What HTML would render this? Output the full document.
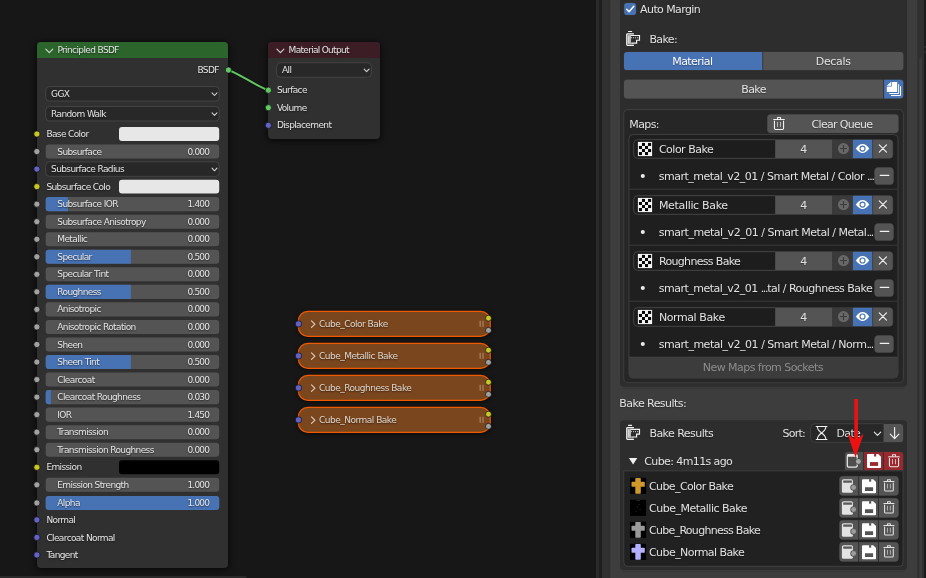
<!DOCTYPE html>
<html lang="en"><head><meta charset="utf-8"><title>Blender bake panel</title>
<style>
html,body{margin:0;padding:0;background:#171717;}
body{width:926px;height:578px;overflow:hidden;position:relative;font-family:"DejaVu Sans","Liberation Sans",sans-serif;}
#root{position:absolute;left:0;top:0;width:926px;height:578px;overflow:hidden;will-change:transform;}
#root div,#root svg{position:absolute;box-sizing:border-box;}
#lay{left:0;top:0;}
.t{line-height:20px;height:20px;white-space:pre;}
.n{text-shadow:0 1px 1.5px rgba(0,0,0,.55);}
.p{text-shadow:0 1px 1px rgba(0,0,0,.35);}
.node{background:#303030;border-radius:4px;box-shadow:0 1px 6px 1px rgba(0,0,0,.65);overflow:hidden;}
.nh{left:0;top:0;width:100%;}
.e{letter-spacing:-1.3px;}
.cns{border-radius:9.6px;box-shadow:0 1px 4px rgba(0,0,0,.6);}
</style></head>
<body><div id="root">
<div class="node" style="left:37.0px;top:42.3px;width:191.3px;height:526.2px"><div class="nh" style="background:#2b652b;height:15.8px"></div></div>
<div class="node" style="left:268.4px;top:42.3px;width:111.4px;height:96.3px"><div class="nh" style="background:#3c1d26;height:15.9px"></div></div>
<div class="cns" style="left:298px;top:310.9px;width:192.6px;height:26px"></div>
<div class="cns" style="left:298px;top:342.9px;width:192.6px;height:26px"></div>
<div class="cns" style="left:298px;top:374.9px;width:192.6px;height:26px"></div>
<div class="cns" style="left:298px;top:406.9px;width:192.6px;height:26px"></div>
<svg id="lay" width="926" height="578" viewBox="0 0 926 578">
<polyline points="45.8,49.1 49.3,52.7 52.8,49.1" fill="none" stroke="#d6dcd6" stroke-width="1.05" stroke-linecap="round" stroke-linejoin="round"/>
<path d="M49.25 86.55H215.65A3.5 3.5 0 0 1 219.15 90.05V97.55A3.5 3.5 0 0 1 215.65 101.05H49.25A3.5 3.5 0 0 1 45.75 97.55V90.05A3.5 3.5 0 0 1 49.25 86.55Z" fill="#282828" stroke="#464646" stroke-width="0.9"/>
<polyline points="212.05,92.9 214.5,95.5 216.95,92.9" fill="none" stroke="#d4d4d4" stroke-width="1.05" stroke-linecap="round" stroke-linejoin="round"/>
<path d="M49.25 106.45H215.65A3.5 3.5 0 0 1 219.15 109.95V117.45A3.5 3.5 0 0 1 215.65 120.95H49.25A3.5 3.5 0 0 1 45.75 117.45V109.95A3.5 3.5 0 0 1 49.25 106.45Z" fill="#282828" stroke="#464646" stroke-width="0.9"/>
<polyline points="212.05,112.8 214.5,115.4 216.95,112.8" fill="none" stroke="#d4d4d4" stroke-width="1.05" stroke-linecap="round" stroke-linejoin="round"/>
<path d="M122 127.05H216.2A3 3 0 0 1 219.2 130.05V137.95A3 3 0 0 1 216.2 140.95H122A3 3 0 0 1 119 137.95V130.05A3 3 0 0 1 122 127.05Z" fill="#e7e7e7"/>
<path d="M48.7 144.49H216.2A3 3 0 0 1 219.2 147.49V155.59A3 3 0 0 1 216.2 158.59H48.7A3 3 0 0 1 45.7 155.59V147.49A3 3 0 0 1 48.7 144.49Z" fill="#545454"/>
<path d="M49.25 161.83H215.65A3.5 3.5 0 0 1 219.15 165.33V172.83A3.5 3.5 0 0 1 215.65 176.33H49.25A3.5 3.5 0 0 1 45.75 172.83V165.33A3.5 3.5 0 0 1 49.25 161.83Z" fill="#282828" stroke="#464646" stroke-width="0.9"/>
<polyline points="212.05,168.18 214.5,170.78 216.95,168.18" fill="none" stroke="#d4d4d4" stroke-width="1.05" stroke-linecap="round" stroke-linejoin="round"/>
<path d="M122 179.67H216.2A3 3 0 0 1 219.2 182.67V190.57A3 3 0 0 1 216.2 193.57H122A3 3 0 0 1 119 190.57V182.67A3 3 0 0 1 122 179.67Z" fill="#e7e7e7"/>
<path d="M48.7 197.11H216.2A3 3 0 0 1 219.2 200.11V208.21A3 3 0 0 1 216.2 211.21H48.7A3 3 0 0 1 45.7 208.21V200.11A3 3 0 0 1 48.7 197.11Z" fill="#545454"/>
<path d="M48.7 197.11H67.91V211.21H48.7A3 3 0 0 1 45.7 208.21V200.11A3 3 0 0 1 48.7 197.11Z" fill="#4772b3"/>
<path d="M48.7 214.65H216.2A3 3 0 0 1 219.2 217.65V225.75A3 3 0 0 1 216.2 228.75H48.7A3 3 0 0 1 45.7 225.75V217.65A3 3 0 0 1 48.7 214.65Z" fill="#545454"/>
<path d="M48.7 232.19H216.2A3 3 0 0 1 219.2 235.19V243.29A3 3 0 0 1 216.2 246.29H48.7A3 3 0 0 1 45.7 243.29V235.19A3 3 0 0 1 48.7 232.19Z" fill="#545454"/>
<path d="M48.7 249.73H216.2A3 3 0 0 1 219.2 252.73V260.83A3 3 0 0 1 216.2 263.83H48.7A3 3 0 0 1 45.7 260.83V252.73A3 3 0 0 1 48.7 249.73Z" fill="#545454"/>
<path d="M48.7 249.73H130.89V263.83H48.7A3 3 0 0 1 45.7 260.83V252.73A3 3 0 0 1 48.7 249.73Z" fill="#4772b3"/>
<path d="M48.7 267.27H216.2A3 3 0 0 1 219.2 270.27V278.37A3 3 0 0 1 216.2 281.37H48.7A3 3 0 0 1 45.7 278.37V270.27A3 3 0 0 1 48.7 267.27Z" fill="#545454"/>
<path d="M48.7 284.81H216.2A3 3 0 0 1 219.2 287.81V295.91A3 3 0 0 1 216.2 298.91H48.7A3 3 0 0 1 45.7 295.91V287.81A3 3 0 0 1 48.7 284.81Z" fill="#545454"/>
<path d="M48.7 284.81H130.89V298.91H48.7A3 3 0 0 1 45.7 295.91V287.81A3 3 0 0 1 48.7 284.81Z" fill="#4772b3"/>
<path d="M48.7 302.35H216.2A3 3 0 0 1 219.2 305.35V313.45A3 3 0 0 1 216.2 316.45H48.7A3 3 0 0 1 45.7 313.45V305.35A3 3 0 0 1 48.7 302.35Z" fill="#545454"/>
<path d="M48.7 319.89H216.2A3 3 0 0 1 219.2 322.89V330.99A3 3 0 0 1 216.2 333.99H48.7A3 3 0 0 1 45.7 330.99V322.89A3 3 0 0 1 48.7 319.89Z" fill="#545454"/>
<path d="M48.7 337.43H216.2A3 3 0 0 1 219.2 340.43V348.53A3 3 0 0 1 216.2 351.53H48.7A3 3 0 0 1 45.7 348.53V340.43A3 3 0 0 1 48.7 337.43Z" fill="#545454"/>
<path d="M48.7 354.97H216.2A3 3 0 0 1 219.2 357.97V366.07A3 3 0 0 1 216.2 369.07H48.7A3 3 0 0 1 45.7 366.07V357.97A3 3 0 0 1 48.7 354.97Z" fill="#545454"/>
<path d="M48.7 354.97H130.89V369.07H48.7A3 3 0 0 1 45.7 366.07V357.97A3 3 0 0 1 48.7 354.97Z" fill="#4772b3"/>
<path d="M48.7 372.51H216.2A3 3 0 0 1 219.2 375.51V383.61A3 3 0 0 1 216.2 386.61H48.7A3 3 0 0 1 45.7 383.61V375.51A3 3 0 0 1 48.7 372.51Z" fill="#545454"/>
<path d="M48.7 390.05H216.2A3 3 0 0 1 219.2 393.05V401.15A3 3 0 0 1 216.2 404.15H48.7A3 3 0 0 1 45.7 401.15V393.05A3 3 0 0 1 48.7 390.05Z" fill="#545454"/>
<path d="M48.7 390.05H50.91V404.15H48.7A3 3 0 0 1 45.7 401.15V393.05A3 3 0 0 1 48.7 390.05Z" fill="#4772b3"/>
<path d="M48.7 407.59H216.2A3 3 0 0 1 219.2 410.59V418.69A3 3 0 0 1 216.2 421.69H48.7A3 3 0 0 1 45.7 418.69V410.59A3 3 0 0 1 48.7 407.59Z" fill="#545454"/>
<path d="M48.7 425.13H216.2A3 3 0 0 1 219.2 428.13V436.23A3 3 0 0 1 216.2 439.23H48.7A3 3 0 0 1 45.7 436.23V428.13A3 3 0 0 1 48.7 425.13Z" fill="#545454"/>
<path d="M48.7 442.67H216.2A3 3 0 0 1 219.2 445.67V453.77A3 3 0 0 1 216.2 456.77H48.7A3 3 0 0 1 45.7 453.77V445.67A3 3 0 0 1 48.7 442.67Z" fill="#545454"/>
<path d="M122 460.31H216.2A3 3 0 0 1 219.2 463.31V471.21A3 3 0 0 1 216.2 474.21H122A3 3 0 0 1 119 471.21V463.31A3 3 0 0 1 122 460.31Z" fill="#000000"/>
<path d="M48.7 477.75H216.2A3 3 0 0 1 219.2 480.75V488.85A3 3 0 0 1 216.2 491.85H48.7A3 3 0 0 1 45.7 488.85V480.75A3 3 0 0 1 48.7 477.75Z" fill="#545454"/>
<path d="M48.7 495.89H216.2A3 3 0 0 1 219.2 498.89V506.99A3 3 0 0 1 216.2 509.99H48.7A3 3 0 0 1 45.7 506.99V498.89A3 3 0 0 1 48.7 495.89Z" fill="#545454"/>
<path d="M48.7 495.89H216.2A3 3 0 0 1 219.2 498.89V506.99A3 3 0 0 1 216.2 509.99H48.7A3 3 0 0 1 45.7 506.99V498.89A3 3 0 0 1 48.7 495.89Z" fill="#4772b3"/>
<polyline points="276.9,49.1 280.4,52.7 283.9,49.1" fill="none" stroke="#dcd6d8" stroke-width="1.05" stroke-linecap="round" stroke-linejoin="round"/>
<path d="M280.15 62.75H367.75A3.5 3.5 0 0 1 371.25 66.25V73.75A3.5 3.5 0 0 1 367.75 77.25H280.15A3.5 3.5 0 0 1 276.65 73.75V66.25A3.5 3.5 0 0 1 280.15 62.75Z" fill="#282828" stroke="#464646" stroke-width="0.9"/>
<polyline points="364.15,69.1 366.6,71.7 369.05,69.1" fill="none" stroke="#d4d4d4" stroke-width="1.05" stroke-linecap="round" stroke-linejoin="round"/>
<path d="M228.4 70 C 236 72, 260 88.2, 268.4 90.2" fill="none" stroke="#0c0c0c" stroke-width="3.6" stroke-opacity=".5"/>
<path d="M228.4 70 C 236 72, 260 88.2, 268.4 90.2" fill="none" stroke="#63c763" stroke-width="2"/>
<path d="M307.88 311.42H480.62A9.6 9.6 0 0 1 490.23 321.02V326.72A9.6 9.6 0 0 1 480.62 336.32H307.88A9.6 9.6 0 0 1 298.27 326.72V321.02A9.6 9.6 0 0 1 307.88 311.42Z" fill="#79461d" stroke="#ee5a00" stroke-width="1.15"/>
<polyline points="311.5,320.9 314.9,324.1 311.5,327.3" fill="none" stroke="#dfd2c6" stroke-width="1.1" stroke-linecap="round" stroke-linejoin="round"/>
<path d="M480.2 320.8V326.8M483.0 320.8V326.8" stroke="#ab7f5b" stroke-width="1.3"/>
<path d="M307.88 343.42H480.62A9.6 9.6 0 0 1 490.23 353.02V358.72A9.6 9.6 0 0 1 480.62 368.32H307.88A9.6 9.6 0 0 1 298.27 358.72V353.02A9.6 9.6 0 0 1 307.88 343.42Z" fill="#79461d" stroke="#ee5a00" stroke-width="1.15"/>
<polyline points="311.5,352.9 314.9,356.1 311.5,359.3" fill="none" stroke="#dfd2c6" stroke-width="1.1" stroke-linecap="round" stroke-linejoin="round"/>
<path d="M480.2 352.8V358.8M483.0 352.8V358.8" stroke="#ab7f5b" stroke-width="1.3"/>
<path d="M307.88 375.42H480.62A9.6 9.6 0 0 1 490.23 385.02V390.72A9.6 9.6 0 0 1 480.62 400.32H307.88A9.6 9.6 0 0 1 298.27 390.72V385.02A9.6 9.6 0 0 1 307.88 375.42Z" fill="#79461d" stroke="#ee5a00" stroke-width="1.15"/>
<polyline points="311.5,384.9 314.9,388.1 311.5,391.3" fill="none" stroke="#dfd2c6" stroke-width="1.1" stroke-linecap="round" stroke-linejoin="round"/>
<path d="M480.2 384.8V390.8M483.0 384.8V390.8" stroke="#ab7f5b" stroke-width="1.3"/>
<path d="M307.88 407.42H480.62A9.6 9.6 0 0 1 490.23 417.02V422.72A9.6 9.6 0 0 1 480.62 432.32H307.88A9.6 9.6 0 0 1 298.27 422.72V417.02A9.6 9.6 0 0 1 307.88 407.42Z" fill="#79461d" stroke="#ee5a00" stroke-width="1.15"/>
<polyline points="311.5,416.9 314.9,420.1 311.5,423.3" fill="none" stroke="#dfd2c6" stroke-width="1.1" stroke-linecap="round" stroke-linejoin="round"/>
<path d="M480.2 416.8V422.8M483.0 416.8V422.8" stroke="#ab7f5b" stroke-width="1.3"/>
<circle cx="36.9" cy="134" r="3.1" fill="#c7c729" stroke="#0e0e0e" stroke-width=".7"/>
<circle cx="36.9" cy="151.54" r="3.1" fill="#a1a1a1" stroke="#0e0e0e" stroke-width=".7"/>
<circle cx="36.9" cy="169.08" r="3.1" fill="#6363c7" stroke="#0e0e0e" stroke-width=".7"/>
<circle cx="36.9" cy="186.62" r="3.1" fill="#c7c729" stroke="#0e0e0e" stroke-width=".7"/>
<circle cx="36.9" cy="204.16" r="3.1" fill="#a1a1a1" stroke="#0e0e0e" stroke-width=".7"/>
<circle cx="36.9" cy="221.7" r="3.1" fill="#a1a1a1" stroke="#0e0e0e" stroke-width=".7"/>
<circle cx="36.9" cy="239.24" r="3.1" fill="#a1a1a1" stroke="#0e0e0e" stroke-width=".7"/>
<circle cx="36.9" cy="256.78" r="3.1" fill="#a1a1a1" stroke="#0e0e0e" stroke-width=".7"/>
<circle cx="36.9" cy="274.32" r="3.1" fill="#a1a1a1" stroke="#0e0e0e" stroke-width=".7"/>
<circle cx="36.9" cy="291.86" r="3.1" fill="#a1a1a1" stroke="#0e0e0e" stroke-width=".7"/>
<circle cx="36.9" cy="309.4" r="3.1" fill="#a1a1a1" stroke="#0e0e0e" stroke-width=".7"/>
<circle cx="36.9" cy="326.94" r="3.1" fill="#a1a1a1" stroke="#0e0e0e" stroke-width=".7"/>
<circle cx="36.9" cy="344.48" r="3.1" fill="#a1a1a1" stroke="#0e0e0e" stroke-width=".7"/>
<circle cx="36.9" cy="362.02" r="3.1" fill="#a1a1a1" stroke="#0e0e0e" stroke-width=".7"/>
<circle cx="36.9" cy="379.56" r="3.1" fill="#a1a1a1" stroke="#0e0e0e" stroke-width=".7"/>
<circle cx="36.9" cy="397.1" r="3.1" fill="#a1a1a1" stroke="#0e0e0e" stroke-width=".7"/>
<circle cx="36.9" cy="414.64" r="3.1" fill="#a1a1a1" stroke="#0e0e0e" stroke-width=".7"/>
<circle cx="36.9" cy="432.18" r="3.1" fill="#a1a1a1" stroke="#0e0e0e" stroke-width=".7"/>
<circle cx="36.9" cy="449.72" r="3.1" fill="#a1a1a1" stroke="#0e0e0e" stroke-width=".7"/>
<circle cx="36.9" cy="467.26" r="3.1" fill="#c7c729" stroke="#0e0e0e" stroke-width=".7"/>
<circle cx="36.9" cy="484.8" r="3.1" fill="#a1a1a1" stroke="#0e0e0e" stroke-width=".7"/>
<circle cx="36.9" cy="502.94" r="3.1" fill="#a1a1a1" stroke="#0e0e0e" stroke-width=".7"/>
<circle cx="36.9" cy="519.88" r="3.1" fill="#6363c7" stroke="#0e0e0e" stroke-width=".7"/>
<circle cx="36.9" cy="537.42" r="3.1" fill="#6363c7" stroke="#0e0e0e" stroke-width=".7"/>
<circle cx="36.9" cy="554.96" r="3.1" fill="#6363c7" stroke="#0e0e0e" stroke-width=".7"/>
<circle cx="268.4" cy="90.2" r="3.1" fill="#63c763" stroke="#0e0e0e" stroke-width=".7"/>
<circle cx="268.4" cy="107.7" r="3.1" fill="#63c763" stroke="#0e0e0e" stroke-width=".7"/>
<circle cx="268.4" cy="125.3" r="3.1" fill="#6363c7" stroke="#0e0e0e" stroke-width=".7"/>
<circle cx="228.4" cy="70" r="3.1" fill="#63c763" stroke="#0e0e0e" stroke-width=".7"/>
<circle cx="298.5" cy="323.9" r="3.15" fill="#6363c7" stroke="#0e0e0e" stroke-width=".7"/>
<circle cx="488.45" cy="318.15" r="2.95" fill="#c7c729" stroke="#0e0e0e" stroke-width=".7"/>
<circle cx="488.45" cy="330.35" r="2.95" fill="#a1a1a1" stroke="#0e0e0e" stroke-width=".7"/>
<circle cx="298.5" cy="355.9" r="3.15" fill="#6363c7" stroke="#0e0e0e" stroke-width=".7"/>
<circle cx="488.45" cy="350.15" r="2.95" fill="#c7c729" stroke="#0e0e0e" stroke-width=".7"/>
<circle cx="488.45" cy="362.35" r="2.95" fill="#a1a1a1" stroke="#0e0e0e" stroke-width=".7"/>
<circle cx="298.5" cy="387.9" r="3.15" fill="#6363c7" stroke="#0e0e0e" stroke-width=".7"/>
<circle cx="488.45" cy="382.15" r="2.95" fill="#c7c729" stroke="#0e0e0e" stroke-width=".7"/>
<circle cx="488.45" cy="394.35" r="2.95" fill="#a1a1a1" stroke="#0e0e0e" stroke-width=".7"/>
<circle cx="298.5" cy="419.9" r="3.15" fill="#6363c7" stroke="#0e0e0e" stroke-width=".7"/>
<circle cx="488.45" cy="414.15" r="2.95" fill="#c7c729" stroke="#0e0e0e" stroke-width=".7"/>
<circle cx="488.45" cy="426.35" r="2.95" fill="#a1a1a1" stroke="#0e0e0e" stroke-width=".7"/>
<path d="M-2 576.1H244.8A2 2 0 0 1 246.8 578.1V580A2 2 0 0 1 244.8 582H-2A2 2 0 0 1 -4 580V578.1A2 2 0 0 1 -2 576.1Z" fill="#2a2a2a"/>
<path d="M596 0H599V578H596V0Z" fill="#2a2a2a"/>
<path d="M599 0H602V578H599V0Z" fill="#1e1e1e"/>
<path d="M602 0H924V578H602V0Z" fill="#303030"/>
<path d="M924 0H926V578H924V0Z" fill="#1b1b1b"/>
<path d="M924 46.6H926V47.5H924V46.6Z" fill="#383838"/>
<path d="M924 51.6H926V52.5H924V51.6Z" fill="#383838"/>
<path d="M610.3 0H917.2V578H610.3V0Z" fill="#3d3d3d"/>
<path d="M920.7 58H920.7A1.4 1.4 0 0 1 922.1 59.4V580.6A1.4 1.4 0 0 1 920.7 582H920.7A1.4 1.4 0 0 1 919.3 580.6V59.4A1.4 1.4 0 0 1 920.7 58Z" fill="#3b3b3b"/>
<path d="M623.5 -5.6H903.6A4 4 0 0 1 907.6 -1.6V383.3A4 4 0 0 1 903.6 387.3H623.5A4 4 0 0 1 619.5 383.3V-1.6A4 4 0 0 1 623.5 -5.6Z" fill="#2d2d2d" stroke="#404040" stroke-width="0.8"/>
<path d="M622.8 388.4H904.3" stroke="#343434" stroke-width=".7" stroke-opacity=".8"/>
<path d="M623.5 419.7H903.5A4 4 0 0 1 907.5 423.7V566.7A4 4 0 0 1 903.5 570.7H623.5A4 4 0 0 1 619.5 566.7V423.7A4 4 0 0 1 623.5 419.7Z" fill="#2d2d2d" stroke="#404040" stroke-width="0.8"/>
<path d="M622.8 571.8H904.3" stroke="#343434" stroke-width=".7" stroke-opacity=".8"/>
<path d="M626.8 2.5H633.4A3.2 3.2 0 0 1 636.6 5.7V12.3A3.2 3.2 0 0 1 633.4 15.5H626.8A3.2 3.2 0 0 1 623.6 12.3V5.7A3.2 3.2 0 0 1 626.8 2.5Z" fill="#3d3d3d" fill-opacity="0.55"/>
<path d="M626.8 3.1H633.4A2.6 2.6 0 0 1 636 5.7V12.3A2.6 2.6 0 0 1 633.4 14.9H626.8A2.6 2.6 0 0 1 624.2 12.3V5.7A2.6 2.6 0 0 1 626.8 3.1Z" fill="#4772b3"/>
<polyline points="626.7,9.3 629.1,11.7 633.8,6.2" fill="none" stroke="#fff" stroke-width="1.5" stroke-linecap="round" stroke-linejoin="round"/>
<g transform="translate(625 30)"><rect x="3.0" y="0.95" width="4.1" height="1.05" rx=".35" fill="#f3f3f3"/><path d="M8.9 3.75H2.5Q1.75 3.75 1.75 4.5V14.6Q1.75 15.35 2.5 15.35H8.9" fill="none" stroke="#f3f3f3" stroke-width="1.25"/><rect x="2.5" y="5.3" width="2.3" height="8.4" fill="#d4d4d4"/><rect x="4.75" y="5.0" width=".95" height="8.9" fill="#f3f3f3"/><path d="M2.4 13.95H8.6" stroke="#f3f3f3" stroke-width=".55" stroke-opacity=".8"/><path d="M2.4 4.95H5.6" stroke="#f3f3f3" stroke-width=".45" stroke-opacity=".7"/><path d="M5.6 5.45H14.5V10.2H11.6V13.05H6.2" fill="none" stroke="#f3f3f3" stroke-width="1.15"/><path d="M6.05 7.75H6.95M8.05 7.75H8.95M10.1 7.75H11M12.2 7.75H13.1" stroke="#f3f3f3" stroke-width=".95"/></g>
<path d="M627.2 51.4H762.9V70.7H627.2A3.8 3.8 0 0 1 623.4 66.9V55.2A3.8 3.8 0 0 1 627.2 51.4Z" fill="#3d3d3d" fill-opacity="0.55"/>
<path d="M627.2 52H762.3V70.1H627.2A3.2 3.2 0 0 1 624 66.9V55.2A3.2 3.2 0 0 1 627.2 52Z" fill="#4772b3"/>
<path d="M762.6 51.4H900.1A3.8 3.8 0 0 1 903.9 55.2V66.9A3.8 3.8 0 0 1 900.1 70.7H762.6V51.4Z" fill="#3d3d3d" fill-opacity="0.55"/>
<path d="M763.2 52H900.1A3.2 3.2 0 0 1 903.3 55.2V66.9A3.2 3.2 0 0 1 900.1 70.1H763.2V52Z" fill="#545454"/>
<path d="M627.2 79.1H883.8V99H627.2A3.8 3.8 0 0 1 623.4 95.2V82.9A3.8 3.8 0 0 1 627.2 79.1Z" fill="#3d3d3d" fill-opacity="0.55"/>
<path d="M627.2 79.7H883.2V98.4H627.2A3.2 3.2 0 0 1 624 95.2V82.9A3.2 3.2 0 0 1 627.2 79.7Z" fill="#545454"/>
<path d="M883.5 79.1H900.1A3.8 3.8 0 0 1 903.9 82.9V95.2A3.8 3.8 0 0 1 900.1 99H883.5V79.1Z" fill="#3d3d3d" fill-opacity="0.55"/>
<path d="M884.1 79.7H900.1A3.2 3.2 0 0 1 903.3 82.9V95.2A3.2 3.2 0 0 1 900.1 98.4H884.1V79.7Z" fill="#4772b3"/>
<path d="M891.8 81.9H897.2V92H886.8V86.5H891.8Z" fill="#fff"/><path d="M886.75 85.8L891.1 81.75V85.8Z" fill="#fff"/><path d="M898.65 84.2V93.55H889.2" fill="none" stroke="#fff" stroke-width="1"/><path d="M900.55 86.2V95.55H891" fill="none" stroke="#fff" stroke-width="1"/>
<path d="M627.95 109.65H899.15A4.2 4.2 0 0 1 903.35 113.85V378.55A4.2 4.2 0 0 1 899.15 382.75H627.95A4.2 4.2 0 0 1 623.75 378.55V113.85A4.2 4.2 0 0 1 627.95 109.65Z" fill="#262626" stroke="#424242" stroke-width="0.9"/>
<path d="M770.8 113.8H895A4 4 0 0 1 899 117.8V129.6A4 4 0 0 1 895 133.6H770.8A4 4 0 0 1 766.8 129.6V117.8A4 4 0 0 1 770.8 113.8Z" fill="#3d3d3d" fill-opacity="0.55"/>
<path d="M770.8 114.4H895A3.4 3.4 0 0 1 898.4 117.8V129.6A3.4 3.4 0 0 1 895 133H770.8A3.4 3.4 0 0 1 767.4 129.6V117.8A3.4 3.4 0 0 1 770.8 114.4Z" fill="#545454"/>
<g transform="translate(772 116) scale(1.0)" fill="none"><path d="M1.3 3.5H12.7" stroke="#f0f0f0" stroke-width="1.05"/><path d="M5.5 3.3V1.55H8.5V3.3" stroke="#f0f0f0" stroke-width="1.05" stroke-linejoin="round"/><path d="M2.45 5.1V12.3Q2.45 13.5 3.65 13.5H10.35Q11.55 13.5 11.55 12.3V5.1" stroke="#f0f0f0" stroke-width="1.1" stroke-linecap="round"/><path d="M5.5 5.9V10.9M8.5 5.9V10.9" stroke="#b8b8b8" stroke-width="1"/></g>
<path d="M632.95 134.55H893.95A4 4 0 0 1 897.95 138.55V373.95A4 4 0 0 1 893.95 377.95H632.95A4 4 0 0 1 628.95 373.95V138.55A4 4 0 0 1 632.95 134.55Z" fill="#1f1f1f" stroke="#424242" stroke-width="0.9"/>
<path d="M637.65 139.65H775.55V158.35H637.65A4 4 0 0 1 633.65 154.35V143.65A4 4 0 0 1 637.65 139.65Z" fill="#1d1d1d" stroke="#474747" stroke-width="0.9"/>
<g transform="translate(637.9 141.9) scale(1.014)"><rect width="14" height="14" fill="#f4f4f4"/><rect x="4" y="1" width="3" height="3" fill="#060606"/><rect x="10" y="1" width="3" height="3" fill="#060606"/><rect x="1" y="4" width="3" height="3" fill="#060606"/><rect x="7" y="4" width="3" height="3" fill="#060606"/><rect x="4" y="7" width="3" height="3" fill="#060606"/><rect x="10" y="7" width="3" height="3" fill="#060606"/><rect x="1" y="10" width="3" height="3" fill="#060606"/><rect x="7" y="10" width="3" height="3" fill="#060606"/></g>
<path d="M775.3 139.2H888.9A4.4 4.4 0 0 1 893.3 143.6V154.4A4.4 4.4 0 0 1 888.9 158.8H775.3V139.2Z" fill="#3d3d3d" fill-opacity="0.9"/>
<path d="M775.4 139.8H832.3V158.2H775.4V139.8Z" fill="#545454"/>
<path d="M832.3 139.8H852.9V158.2H832.3V139.8Z" fill="#3a3a3a"/>
<path d="M852.9 139.8H872.2V158.2H852.9V139.8Z" fill="#4772b3"/>
<path d="M873.1 139.8H889.4A3.2 3.2 0 0 1 892.6 143V155A3.2 3.2 0 0 1 889.4 158.2H873.1V139.8Z" fill="#545454"/>
<circle cx="843.5" cy="148.55" r="5.55" fill="#686868"/><path d="M840 148.55H847M843.5 145.05V152.05" stroke="#3a3a3a" stroke-width="1.1"/>
<g transform="translate(862.55 148.55)"><path d="M-6.7 0Q-3.4 -4.45 0 -4.45Q3.4 -4.45 6.7 0Q3.4 4.45 0 4.45Q-3.4 4.45 -6.7 0Z" fill="#fff"/><circle r="2.5" fill="none" stroke="#4772b3" stroke-width="1.15"/></g>
<path d="M879.3 144.95L886.5 152.15M886.5 144.95L879.3 152.15" stroke="#f2f2f2" stroke-width="1.15" stroke-linecap="round"/>
<circle cx="642.8" cy="176" r="2.05" fill="#ececec"/>
<path d="M878.2 166.9H889.9A4.2 4.2 0 0 1 894.1 171.1V180.9A4.2 4.2 0 0 1 889.9 185.1H878.2A4.2 4.2 0 0 1 874 180.9V171.1A4.2 4.2 0 0 1 878.2 166.9Z" fill="#3d3d3d" fill-opacity="0.55"/>
<path d="M878.2 167.5H889.9A3.6 3.6 0 0 1 893.5 171.1V180.9A3.6 3.6 0 0 1 889.9 184.5H878.2A3.6 3.6 0 0 1 874.6 180.9V171.1A3.6 3.6 0 0 1 878.2 167.5Z" fill="#545454"/>
<path d="M880.3 175.45H888.8" stroke="#f0f0f0" stroke-width="1.2" stroke-linecap="round"/>
<path d="M629 188.8H897.9V189.7H629V188.8Z" fill="#383838"/>
<path d="M637.65 195.65H775.55V214.35H637.65A4 4 0 0 1 633.65 210.35V199.65A4 4 0 0 1 637.65 195.65Z" fill="#1d1d1d" stroke="#474747" stroke-width="0.9"/>
<g transform="translate(637.9 197.9) scale(1.014)"><rect width="14" height="14" fill="#f4f4f4"/><rect x="4" y="1" width="3" height="3" fill="#060606"/><rect x="10" y="1" width="3" height="3" fill="#060606"/><rect x="1" y="4" width="3" height="3" fill="#060606"/><rect x="7" y="4" width="3" height="3" fill="#060606"/><rect x="4" y="7" width="3" height="3" fill="#060606"/><rect x="10" y="7" width="3" height="3" fill="#060606"/><rect x="1" y="10" width="3" height="3" fill="#060606"/><rect x="7" y="10" width="3" height="3" fill="#060606"/></g>
<path d="M775.3 195.2H888.9A4.4 4.4 0 0 1 893.3 199.6V210.4A4.4 4.4 0 0 1 888.9 214.8H775.3V195.2Z" fill="#3d3d3d" fill-opacity="0.9"/>
<path d="M775.4 195.8H832.3V214.2H775.4V195.8Z" fill="#545454"/>
<path d="M832.3 195.8H852.9V214.2H832.3V195.8Z" fill="#3a3a3a"/>
<path d="M852.9 195.8H872.2V214.2H852.9V195.8Z" fill="#4772b3"/>
<path d="M873.1 195.8H889.4A3.2 3.2 0 0 1 892.6 199V211A3.2 3.2 0 0 1 889.4 214.2H873.1V195.8Z" fill="#545454"/>
<circle cx="843.5" cy="204.55" r="5.55" fill="#686868"/><path d="M840 204.55H847M843.5 201.05V208.05" stroke="#3a3a3a" stroke-width="1.1"/>
<g transform="translate(862.55 204.55)"><path d="M-6.7 0Q-3.4 -4.45 0 -4.45Q3.4 -4.45 6.7 0Q3.4 4.45 0 4.45Q-3.4 4.45 -6.7 0Z" fill="#fff"/><circle r="2.5" fill="none" stroke="#4772b3" stroke-width="1.15"/></g>
<path d="M879.3 200.95L886.5 208.15M886.5 200.95L879.3 208.15" stroke="#f2f2f2" stroke-width="1.15" stroke-linecap="round"/>
<circle cx="642.8" cy="232" r="2.05" fill="#ececec"/>
<path d="M878.2 222.9H889.9A4.2 4.2 0 0 1 894.1 227.1V236.9A4.2 4.2 0 0 1 889.9 241.1H878.2A4.2 4.2 0 0 1 874 236.9V227.1A4.2 4.2 0 0 1 878.2 222.9Z" fill="#3d3d3d" fill-opacity="0.55"/>
<path d="M878.2 223.5H889.9A3.6 3.6 0 0 1 893.5 227.1V236.9A3.6 3.6 0 0 1 889.9 240.5H878.2A3.6 3.6 0 0 1 874.6 236.9V227.1A3.6 3.6 0 0 1 878.2 223.5Z" fill="#545454"/>
<path d="M880.3 231.45H888.8" stroke="#f0f0f0" stroke-width="1.2" stroke-linecap="round"/>
<path d="M629 244.8H897.9V245.7H629V244.8Z" fill="#383838"/>
<path d="M637.65 251.65H775.55V270.35H637.65A4 4 0 0 1 633.65 266.35V255.65A4 4 0 0 1 637.65 251.65Z" fill="#1d1d1d" stroke="#474747" stroke-width="0.9"/>
<g transform="translate(637.9 253.9) scale(1.014)"><rect width="14" height="14" fill="#f4f4f4"/><rect x="4" y="1" width="3" height="3" fill="#060606"/><rect x="10" y="1" width="3" height="3" fill="#060606"/><rect x="1" y="4" width="3" height="3" fill="#060606"/><rect x="7" y="4" width="3" height="3" fill="#060606"/><rect x="4" y="7" width="3" height="3" fill="#060606"/><rect x="10" y="7" width="3" height="3" fill="#060606"/><rect x="1" y="10" width="3" height="3" fill="#060606"/><rect x="7" y="10" width="3" height="3" fill="#060606"/></g>
<path d="M775.3 251.2H888.9A4.4 4.4 0 0 1 893.3 255.6V266.4A4.4 4.4 0 0 1 888.9 270.8H775.3V251.2Z" fill="#3d3d3d" fill-opacity="0.9"/>
<path d="M775.4 251.8H832.3V270.2H775.4V251.8Z" fill="#545454"/>
<path d="M832.3 251.8H852.9V270.2H832.3V251.8Z" fill="#3a3a3a"/>
<path d="M852.9 251.8H872.2V270.2H852.9V251.8Z" fill="#4772b3"/>
<path d="M873.1 251.8H889.4A3.2 3.2 0 0 1 892.6 255V267A3.2 3.2 0 0 1 889.4 270.2H873.1V251.8Z" fill="#545454"/>
<circle cx="843.5" cy="260.55" r="5.55" fill="#686868"/><path d="M840 260.55H847M843.5 257.05V264.05" stroke="#3a3a3a" stroke-width="1.1"/>
<g transform="translate(862.55 260.55)"><path d="M-6.7 0Q-3.4 -4.45 0 -4.45Q3.4 -4.45 6.7 0Q3.4 4.45 0 4.45Q-3.4 4.45 -6.7 0Z" fill="#fff"/><circle r="2.5" fill="none" stroke="#4772b3" stroke-width="1.15"/></g>
<path d="M879.3 256.95L886.5 264.15M886.5 256.95L879.3 264.15" stroke="#f2f2f2" stroke-width="1.15" stroke-linecap="round"/>
<circle cx="642.8" cy="288" r="2.05" fill="#ececec"/>
<path d="M878.2 278.9H889.9A4.2 4.2 0 0 1 894.1 283.1V292.9A4.2 4.2 0 0 1 889.9 297.1H878.2A4.2 4.2 0 0 1 874 292.9V283.1A4.2 4.2 0 0 1 878.2 278.9Z" fill="#3d3d3d" fill-opacity="0.55"/>
<path d="M878.2 279.5H889.9A3.6 3.6 0 0 1 893.5 283.1V292.9A3.6 3.6 0 0 1 889.9 296.5H878.2A3.6 3.6 0 0 1 874.6 292.9V283.1A3.6 3.6 0 0 1 878.2 279.5Z" fill="#545454"/>
<path d="M880.3 287.45H888.8" stroke="#f0f0f0" stroke-width="1.2" stroke-linecap="round"/>
<path d="M629 300.8H897.9V301.7H629V300.8Z" fill="#383838"/>
<path d="M637.65 307.65H775.55V326.35H637.65A4 4 0 0 1 633.65 322.35V311.65A4 4 0 0 1 637.65 307.65Z" fill="#1d1d1d" stroke="#474747" stroke-width="0.9"/>
<g transform="translate(637.9 309.9) scale(1.014)"><rect width="14" height="14" fill="#f4f4f4"/><rect x="4" y="1" width="3" height="3" fill="#060606"/><rect x="10" y="1" width="3" height="3" fill="#060606"/><rect x="1" y="4" width="3" height="3" fill="#060606"/><rect x="7" y="4" width="3" height="3" fill="#060606"/><rect x="4" y="7" width="3" height="3" fill="#060606"/><rect x="10" y="7" width="3" height="3" fill="#060606"/><rect x="1" y="10" width="3" height="3" fill="#060606"/><rect x="7" y="10" width="3" height="3" fill="#060606"/></g>
<path d="M775.3 307.2H888.9A4.4 4.4 0 0 1 893.3 311.6V322.4A4.4 4.4 0 0 1 888.9 326.8H775.3V307.2Z" fill="#3d3d3d" fill-opacity="0.9"/>
<path d="M775.4 307.8H832.3V326.2H775.4V307.8Z" fill="#545454"/>
<path d="M832.3 307.8H852.9V326.2H832.3V307.8Z" fill="#3a3a3a"/>
<path d="M852.9 307.8H872.2V326.2H852.9V307.8Z" fill="#4772b3"/>
<path d="M873.1 307.8H889.4A3.2 3.2 0 0 1 892.6 311V323A3.2 3.2 0 0 1 889.4 326.2H873.1V307.8Z" fill="#545454"/>
<circle cx="843.5" cy="316.55" r="5.55" fill="#686868"/><path d="M840 316.55H847M843.5 313.05V320.05" stroke="#3a3a3a" stroke-width="1.1"/>
<g transform="translate(862.55 316.55)"><path d="M-6.7 0Q-3.4 -4.45 0 -4.45Q3.4 -4.45 6.7 0Q3.4 4.45 0 4.45Q-3.4 4.45 -6.7 0Z" fill="#fff"/><circle r="2.5" fill="none" stroke="#4772b3" stroke-width="1.15"/></g>
<path d="M879.3 312.95L886.5 320.15M886.5 312.95L879.3 320.15" stroke="#f2f2f2" stroke-width="1.15" stroke-linecap="round"/>
<circle cx="642.8" cy="344" r="2.05" fill="#ececec"/>
<path d="M878.2 334.9H889.9A4.2 4.2 0 0 1 894.1 339.1V348.9A4.2 4.2 0 0 1 889.9 353.1H878.2A4.2 4.2 0 0 1 874 348.9V339.1A4.2 4.2 0 0 1 878.2 334.9Z" fill="#3d3d3d" fill-opacity="0.55"/>
<path d="M878.2 335.5H889.9A3.6 3.6 0 0 1 893.5 339.1V348.9A3.6 3.6 0 0 1 889.9 352.5H878.2A3.6 3.6 0 0 1 874.6 348.9V339.1A3.6 3.6 0 0 1 878.2 335.5Z" fill="#545454"/>
<path d="M880.3 343.45H888.8" stroke="#f0f0f0" stroke-width="1.2" stroke-linecap="round"/>
<path d="M628.95 357H897.95V374.3A3.6 3.6 0 0 1 894.35 377.9H632.55A3.6 3.6 0 0 1 628.95 374.3V357Z" fill="#3c3c3c"/>
<path d="M628.95 356.8H897.95V357.6H628.95V356.8Z" fill="#464646"/>
<g transform="translate(625 423.9)"><rect x="3.0" y="0.95" width="4.1" height="1.05" rx=".35" fill="#f3f3f3"/><path d="M8.9 3.75H2.5Q1.75 3.75 1.75 4.5V14.6Q1.75 15.35 2.5 15.35H8.9" fill="none" stroke="#f3f3f3" stroke-width="1.25"/><rect x="2.5" y="5.3" width="2.3" height="8.4" fill="#d4d4d4"/><rect x="4.75" y="5.0" width=".95" height="8.9" fill="#f3f3f3"/><path d="M2.4 13.95H8.6" stroke="#f3f3f3" stroke-width=".55" stroke-opacity=".8"/><path d="M2.4 4.95H5.6" stroke="#f3f3f3" stroke-width=".45" stroke-opacity=".7"/><path d="M5.6 5.45H14.5V10.2H11.6V13.05H6.2" fill="none" stroke="#f3f3f3" stroke-width="1.15"/><path d="M6.05 7.75H6.95M8.05 7.75H8.95M10.1 7.75H11M12.2 7.75H13.1" stroke="#f3f3f3" stroke-width=".95"/></g>
<path d="M814.65 423.75H883.55V442.35H814.65A4 4 0 0 1 810.65 438.35V427.75A4 4 0 0 1 814.65 423.75Z" fill="#282828" stroke="#414141" stroke-width="0.9"/>
<path d="M816.2 426.5H827M816.2 439.5H827" stroke="#f2f2f2" stroke-width="1.05" stroke-linecap="round"/><path d="M817.4 426.8Q817.4 430 821.6 433Q825.8 430 825.8 426.8M817.4 439.2Q817.4 436 821.6 433Q825.8 436 825.8 439.2" fill="none" stroke="#f2f2f2" stroke-width="1.05"/>
<polyline points="874.3,432.1 877.5,435.3 880.7,432.1" fill="none" stroke="#e6e6e6" stroke-width="1.15" stroke-linecap="round" stroke-linejoin="round"/>
<path d="M883.4 423.4H899.9A3.8 3.8 0 0 1 903.7 427.2V438.9A3.8 3.8 0 0 1 899.9 442.7H883.4V423.4Z" fill="#3d3d3d" fill-opacity="0.55"/>
<path d="M884 424H899.9A3.2 3.2 0 0 1 903.1 427.2V438.9A3.2 3.2 0 0 1 899.9 442.1H884V424Z" fill="#545454"/>
<path d="M894.6 427.6V438.5M890.3 434.2L894.6 438.6L898.9 434.2" fill="none" stroke="#f2f2f2" stroke-width="1.15" stroke-linecap="round" stroke-linejoin="round"/>
<path d="M628.9 458H637.3L633.1 464.5Z" fill="#f0f0f0"/>
<path d="M848.2 451.5H863.6V470.7H844.4V455.3A3.8 3.8 0 0 1 848.2 451.5Z" fill="#3d3d3d" fill-opacity="0.55"/>
<path d="M848.2 452.1H863V470.1H845V455.3A3.2 3.2 0 0 1 848.2 452.1Z" fill="#4f4f4f"/>
<path d="M863.5 451.5H883.5V470.7H863.5V451.5Z" fill="#3d3d3d" fill-opacity="0.55"/>
<path d="M864.1 452.1H882.9V470.1H864.1V452.1Z" fill="#97292f"/>
<path d="M883.4 451.5H899.9A3.8 3.8 0 0 1 903.7 455.3V470.7H883.4V451.5Z" fill="#3d3d3d" fill-opacity="0.55"/>
<path d="M884 452.1H899.9A3.2 3.2 0 0 1 903.1 455.3V470.1H884V452.1Z" fill="#97292f"/>
<g transform="translate(846.7 453.9)"><rect x="0.6" y="0.8" width="9.9" height="12.5" rx="1.4" fill="none" stroke="#ececec" stroke-width="1.2"/><rect x="0.6" y="0.6" width="9.9" height="2.3" rx=".8" fill="#ececec"/><circle cx="11.7" cy="7.6" r="3.3" fill="#4f4f4f"/><circle cx="11.7" cy="7.6" r="2.45" fill="#a8a8a8"/></g>
<g transform="translate(867 454)"><path d="M1 0H11.2L14 2.8V13Q14 14 13 14H1Q0 14 0 13V1Q0 0 1 0Z" fill="#ffffff"/><rect x="7.1" y="0" width="2.1" height="2.5" fill="#97292f"/><rect x="3" y="8.1" width="8.1" height="3.8" fill="#97292f"/></g>
<g transform="translate(887 453.3) scale(1.0)" fill="none"><path d="M1.3 3.5H12.7" stroke="#f3e4e5" stroke-width="1.05"/><path d="M5.5 3.3V1.55H8.5V3.3" stroke="#f3e4e5" stroke-width="1.05" stroke-linejoin="round"/><path d="M2.45 5.1V12.3Q2.45 13.5 3.65 13.5H10.35Q11.55 13.5 11.55 12.3V5.1" stroke="#f3e4e5" stroke-width="1.1" stroke-linecap="round"/><path d="M5.5 5.9V10.9M8.5 5.9V10.9" stroke="#d9b5b7" stroke-width="1"/></g>
<path d="M623.75 470.85H903.05V562.35A4 4 0 0 1 899.05 566.35H627.75A4 4 0 0 1 623.75 562.35V470.85Z" fill="#212121" stroke="#424242" stroke-width="0.9"/>
<path d="M630 477.8H646.1V493.9H630V477.8Z" fill="#000"/>
<path d="M636 477.95H640.1A0.7 0.7 0 0 1 640.8 478.65V493.1A0.7 0.7 0 0 1 640.1 493.8H636A0.7 0.7 0 0 1 635.3 493.1V478.65A0.7 0.7 0 0 1 636 477.95Z" fill="#cf982a"/>
<path d="M632.4 481.65H643.9A0.9 0.9 0 0 1 644.8 482.55V485.95A0.9 0.9 0 0 1 643.9 486.85H632.4A0.9 0.9 0 0 1 631.5 485.95V482.55A0.9 0.9 0 0 1 632.4 481.65Z" fill="#cf982a"/>
<path d="M843.3 475.75H894.6A4.4 4.4 0 0 1 899 480.15V491.55A4.4 4.4 0 0 1 894.6 495.95H843.3A4.4 4.4 0 0 1 838.9 491.55V480.15A4.4 4.4 0 0 1 843.3 475.75Z" fill="#3d3d3d" fill-opacity="0.45"/>
<path d="M842.6 476.25H858.2V495.45H842.6A3.2 3.2 0 0 1 839.4 492.25V479.45A3.2 3.2 0 0 1 842.6 476.25Z" fill="#545454"/>
<path d="M859.2 476.25H878V495.45H859.2V476.25Z" fill="#545454"/>
<path d="M879 476.25H895.3A3.2 3.2 0 0 1 898.5 479.45V492.25A3.2 3.2 0 0 1 895.3 495.45H879V476.25Z" fill="#545454"/>
<g transform="translate(841.9 479.05)"><rect x="0" y="0.2" width="11" height="13.6" rx="1.6" fill="#e2e2e2"/><rect x="1.3" y="1.4" width="8.7" height="2.3" fill="#5a5a5a"/><circle cx="11.7" cy="8.5" r="3.3" fill="#545454"/><circle cx="11.7" cy="8.5" r="2.45" fill="#9c9c9c"/></g>
<g transform="translate(862 479.15)"><path d="M1 0H11.2L14 2.8V13Q14 14 13 14H1Q0 14 0 13V1Q0 0 1 0Z" fill="#ffffff"/><rect x="7.1" y="0" width="2.1" height="2.5" fill="#545454"/><rect x="3" y="8.1" width="8.1" height="3.8" fill="#545454"/></g>
<g transform="translate(882.25 478.15) scale(0.955)" fill="none"><path d="M1.3 3.5H12.7" stroke="#e4e4e4" stroke-width="1.05"/><path d="M5.5 3.3V1.55H8.5V3.3" stroke="#e4e4e4" stroke-width="1.05" stroke-linejoin="round"/><path d="M2.45 5.1V12.3Q2.45 13.5 3.65 13.5H10.35Q11.55 13.5 11.55 12.3V5.1" stroke="#e4e4e4" stroke-width="1.1" stroke-linecap="round"/><path d="M5.5 5.9V10.9M8.5 5.9V10.9" stroke="#b0b0b0" stroke-width="1"/></g>
<path d="M630 499.8H646.1V515.9H630V499.8Z" fill="#000"/>
<path d="M636.4 500.55H640" stroke="#303030" stroke-width=".8"/><path d="M637 506.85h1M639.6 509.45h1M635.6 511.25h1M638.4 504.35h1" stroke="#2e2e2e" stroke-width="1"/>
<path d="M843.3 497.75H894.6A4.4 4.4 0 0 1 899 502.15V513.55A4.4 4.4 0 0 1 894.6 517.95H843.3A4.4 4.4 0 0 1 838.9 513.55V502.15A4.4 4.4 0 0 1 843.3 497.75Z" fill="#3d3d3d" fill-opacity="0.45"/>
<path d="M842.6 498.25H858.2V517.45H842.6A3.2 3.2 0 0 1 839.4 514.25V501.45A3.2 3.2 0 0 1 842.6 498.25Z" fill="#545454"/>
<path d="M859.2 498.25H878V517.45H859.2V498.25Z" fill="#545454"/>
<path d="M879 498.25H895.3A3.2 3.2 0 0 1 898.5 501.45V514.25A3.2 3.2 0 0 1 895.3 517.45H879V498.25Z" fill="#545454"/>
<g transform="translate(841.9 501.05)"><rect x="0" y="0.2" width="11" height="13.6" rx="1.6" fill="#e2e2e2"/><rect x="1.3" y="1.4" width="8.7" height="2.3" fill="#5a5a5a"/><circle cx="11.7" cy="8.5" r="3.3" fill="#545454"/><circle cx="11.7" cy="8.5" r="2.45" fill="#9c9c9c"/></g>
<g transform="translate(862 501.15)"><path d="M1 0H11.2L14 2.8V13Q14 14 13 14H1Q0 14 0 13V1Q0 0 1 0Z" fill="#ffffff"/><rect x="7.1" y="0" width="2.1" height="2.5" fill="#545454"/><rect x="3" y="8.1" width="8.1" height="3.8" fill="#545454"/></g>
<g transform="translate(882.25 500.15) scale(0.955)" fill="none"><path d="M1.3 3.5H12.7" stroke="#e4e4e4" stroke-width="1.05"/><path d="M5.5 3.3V1.55H8.5V3.3" stroke="#e4e4e4" stroke-width="1.05" stroke-linejoin="round"/><path d="M2.45 5.1V12.3Q2.45 13.5 3.65 13.5H10.35Q11.55 13.5 11.55 12.3V5.1" stroke="#e4e4e4" stroke-width="1.1" stroke-linecap="round"/><path d="M5.5 5.9V10.9M8.5 5.9V10.9" stroke="#b0b0b0" stroke-width="1"/></g>
<path d="M630 521.8H646.1V537.9H630V521.8Z" fill="#000"/>
<path d="M636 521.95H640.1A0.7 0.7 0 0 1 640.8 522.65V537.1A0.7 0.7 0 0 1 640.1 537.8H636A0.7 0.7 0 0 1 635.3 537.1V522.65A0.7 0.7 0 0 1 636 521.95Z" fill="#9a9a9a"/>
<path d="M632.4 525.65H643.9A0.9 0.9 0 0 1 644.8 526.55V529.95A0.9 0.9 0 0 1 643.9 530.85H632.4A0.9 0.9 0 0 1 631.5 529.95V526.55A0.9 0.9 0 0 1 632.4 525.65Z" fill="#9a9a9a"/>
<path d="M843.3 519.75H894.6A4.4 4.4 0 0 1 899 524.15V535.55A4.4 4.4 0 0 1 894.6 539.95H843.3A4.4 4.4 0 0 1 838.9 535.55V524.15A4.4 4.4 0 0 1 843.3 519.75Z" fill="#3d3d3d" fill-opacity="0.45"/>
<path d="M842.6 520.25H858.2V539.45H842.6A3.2 3.2 0 0 1 839.4 536.25V523.45A3.2 3.2 0 0 1 842.6 520.25Z" fill="#545454"/>
<path d="M859.2 520.25H878V539.45H859.2V520.25Z" fill="#545454"/>
<path d="M879 520.25H895.3A3.2 3.2 0 0 1 898.5 523.45V536.25A3.2 3.2 0 0 1 895.3 539.45H879V520.25Z" fill="#545454"/>
<g transform="translate(841.9 523.05)"><rect x="0" y="0.2" width="11" height="13.6" rx="1.6" fill="#e2e2e2"/><rect x="1.3" y="1.4" width="8.7" height="2.3" fill="#5a5a5a"/><circle cx="11.7" cy="8.5" r="3.3" fill="#545454"/><circle cx="11.7" cy="8.5" r="2.45" fill="#9c9c9c"/></g>
<g transform="translate(862 523.15)"><path d="M1 0H11.2L14 2.8V13Q14 14 13 14H1Q0 14 0 13V1Q0 0 1 0Z" fill="#ffffff"/><rect x="7.1" y="0" width="2.1" height="2.5" fill="#545454"/><rect x="3" y="8.1" width="8.1" height="3.8" fill="#545454"/></g>
<g transform="translate(882.25 522.15) scale(0.955)" fill="none"><path d="M1.3 3.5H12.7" stroke="#e4e4e4" stroke-width="1.05"/><path d="M5.5 3.3V1.55H8.5V3.3" stroke="#e4e4e4" stroke-width="1.05" stroke-linejoin="round"/><path d="M2.45 5.1V12.3Q2.45 13.5 3.65 13.5H10.35Q11.55 13.5 11.55 12.3V5.1" stroke="#e4e4e4" stroke-width="1.1" stroke-linecap="round"/><path d="M5.5 5.9V10.9M8.5 5.9V10.9" stroke="#b0b0b0" stroke-width="1"/></g>
<path d="M630 543.8H646.1V559.9H630V543.8Z" fill="#000"/>
<path d="M636 543.95H640.1A0.7 0.7 0 0 1 640.8 544.65V559.1A0.7 0.7 0 0 1 640.1 559.8H636A0.7 0.7 0 0 1 635.3 559.1V544.65A0.7 0.7 0 0 1 636 543.95Z" fill="#b3b0ff"/>
<path d="M632.4 547.65H643.9A0.9 0.9 0 0 1 644.8 548.55V551.95A0.9 0.9 0 0 1 643.9 552.85H632.4A0.9 0.9 0 0 1 631.5 551.95V548.55A0.9 0.9 0 0 1 632.4 547.65Z" fill="#b3b0ff"/>
<path d="M843.3 541.75H894.6A4.4 4.4 0 0 1 899 546.15V557.55A4.4 4.4 0 0 1 894.6 561.95H843.3A4.4 4.4 0 0 1 838.9 557.55V546.15A4.4 4.4 0 0 1 843.3 541.75Z" fill="#3d3d3d" fill-opacity="0.45"/>
<path d="M842.6 542.25H858.2V561.45H842.6A3.2 3.2 0 0 1 839.4 558.25V545.45A3.2 3.2 0 0 1 842.6 542.25Z" fill="#545454"/>
<path d="M859.2 542.25H878V561.45H859.2V542.25Z" fill="#545454"/>
<path d="M879 542.25H895.3A3.2 3.2 0 0 1 898.5 545.45V558.25A3.2 3.2 0 0 1 895.3 561.45H879V542.25Z" fill="#545454"/>
<g transform="translate(841.9 545.05)"><rect x="0" y="0.2" width="11" height="13.6" rx="1.6" fill="#e2e2e2"/><rect x="1.3" y="1.4" width="8.7" height="2.3" fill="#5a5a5a"/><circle cx="11.7" cy="8.5" r="3.3" fill="#545454"/><circle cx="11.7" cy="8.5" r="2.45" fill="#9c9c9c"/></g>
<g transform="translate(862 545.15)"><path d="M1 0H11.2L14 2.8V13Q14 14 13 14H1Q0 14 0 13V1Q0 0 1 0Z" fill="#ffffff"/><rect x="7.1" y="0" width="2.1" height="2.5" fill="#545454"/><rect x="3" y="8.1" width="8.1" height="3.8" fill="#545454"/></g>
<g transform="translate(882.25 544.15) scale(0.955)" fill="none"><path d="M1.3 3.5H12.7" stroke="#e4e4e4" stroke-width="1.05"/><path d="M5.5 3.3V1.55H8.5V3.3" stroke="#e4e4e4" stroke-width="1.05" stroke-linejoin="round"/><path d="M2.45 5.1V12.3Q2.45 13.5 3.65 13.5H10.35Q11.55 13.5 11.55 12.3V5.1" stroke="#e4e4e4" stroke-width="1.1" stroke-linecap="round"/><path d="M5.5 5.9V10.9M8.5 5.9V10.9" stroke="#b0b0b0" stroke-width="1"/></g>
</svg>
<div class="t n" style="left:57.4px;top:40px;font-size:9px;letter-spacing:-0.62px;color:#e6e6e6;">Principled BSDF</div>
<div class="t n" style="right:707.2px;top:60px;font-size:9px;letter-spacing:-0.62px;color:#e6e6e6;">BSDF</div>
<div class="t n" style="left:51.1px;top:83.8px;font-size:9px;letter-spacing:-0.62px;color:#e6e6e6;">GGX</div>
<div class="t n" style="left:51.1px;top:103.7px;font-size:9px;letter-spacing:-0.62px;color:#e6e6e6;">Random Walk</div>
<div class="t n" style="left:46.4px;top:124px;font-size:9px;letter-spacing:-0.62px;color:#e6e6e6;">Base Color</div>
<div class="t n" style="left:57.3px;top:141.54px;font-size:9px;letter-spacing:-0.62px;color:#e6e6e6;">Subsurface</div>
<div class="t n" style="right:716.8px;top:141.54px;font-size:9px;letter-spacing:-0.8px;color:#e6e6e6;">0.000</div>
<div class="t n" style="left:51.1px;top:159.08px;font-size:9px;letter-spacing:-0.62px;color:#e6e6e6;">Subsurface Radius</div>
<div class="t n" style="left:46.4px;top:176.62px;font-size:9px;letter-spacing:-0.62px;color:#e6e6e6;">Subsurface Colo</div>
<div class="t n" style="left:57.3px;top:194.16px;font-size:9px;letter-spacing:-0.62px;color:#e6e6e6;">Subsurface IOR</div>
<div class="t n" style="right:716.8px;top:194.16px;font-size:9px;letter-spacing:-0.8px;color:#e6e6e6;">1.400</div>
<div class="t n" style="left:57.3px;top:211.7px;font-size:9px;letter-spacing:-0.62px;color:#e6e6e6;">Subsurface Anisotropy</div>
<div class="t n" style="right:716.8px;top:211.7px;font-size:9px;letter-spacing:-0.8px;color:#e6e6e6;">0.000</div>
<div class="t n" style="left:57.3px;top:229.24px;font-size:9px;letter-spacing:-0.62px;color:#e6e6e6;">Metallic</div>
<div class="t n" style="right:716.8px;top:229.24px;font-size:9px;letter-spacing:-0.8px;color:#e6e6e6;">0.000</div>
<div class="t n" style="left:57.3px;top:246.78px;font-size:9px;letter-spacing:-0.62px;color:#e6e6e6;">Specular</div>
<div class="t n" style="right:716.8px;top:246.78px;font-size:9px;letter-spacing:-0.8px;color:#e6e6e6;">0.500</div>
<div class="t n" style="left:57.3px;top:264.32px;font-size:9px;letter-spacing:-0.62px;color:#e6e6e6;">Specular Tint</div>
<div class="t n" style="right:716.8px;top:264.32px;font-size:9px;letter-spacing:-0.8px;color:#e6e6e6;">0.000</div>
<div class="t n" style="left:57.3px;top:281.86px;font-size:9px;letter-spacing:-0.62px;color:#e6e6e6;">Roughness</div>
<div class="t n" style="right:716.8px;top:281.86px;font-size:9px;letter-spacing:-0.8px;color:#e6e6e6;">0.500</div>
<div class="t n" style="left:57.3px;top:299.4px;font-size:9px;letter-spacing:-0.62px;color:#e6e6e6;">Anisotropic</div>
<div class="t n" style="right:716.8px;top:299.4px;font-size:9px;letter-spacing:-0.8px;color:#e6e6e6;">0.000</div>
<div class="t n" style="left:57.3px;top:316.94px;font-size:9px;letter-spacing:-0.62px;color:#e6e6e6;">Anisotropic Rotation</div>
<div class="t n" style="right:716.8px;top:316.94px;font-size:9px;letter-spacing:-0.8px;color:#e6e6e6;">0.000</div>
<div class="t n" style="left:57.3px;top:335.18px;font-size:9px;letter-spacing:-0.62px;color:#e6e6e6;">Sheen</div>
<div class="t n" style="right:716.8px;top:335.18px;font-size:9px;letter-spacing:-0.8px;color:#e6e6e6;">0.000</div>
<div class="t n" style="left:57.3px;top:352.02px;font-size:9px;letter-spacing:-0.62px;color:#e6e6e6;">Sheen Tint</div>
<div class="t n" style="right:716.8px;top:352.02px;font-size:9px;letter-spacing:-0.8px;color:#e6e6e6;">0.500</div>
<div class="t n" style="left:57.3px;top:369.56px;font-size:9px;letter-spacing:-0.62px;color:#e6e6e6;">Clearcoat</div>
<div class="t n" style="right:716.8px;top:369.56px;font-size:9px;letter-spacing:-0.8px;color:#e6e6e6;">0.000</div>
<div class="t n" style="left:57.3px;top:387.1px;font-size:9px;letter-spacing:-0.62px;color:#e6e6e6;">Clearcoat Roughness</div>
<div class="t n" style="right:716.8px;top:387.1px;font-size:9px;letter-spacing:-0.8px;color:#e6e6e6;">0.030</div>
<div class="t n" style="left:57.3px;top:404.64px;font-size:9px;letter-spacing:-0.62px;color:#e6e6e6;">IOR</div>
<div class="t n" style="right:716.8px;top:404.64px;font-size:9px;letter-spacing:-0.8px;color:#e6e6e6;">1.450</div>
<div class="t n" style="left:57.3px;top:422.18px;font-size:9px;letter-spacing:-0.62px;color:#e6e6e6;">Transmission</div>
<div class="t n" style="right:716.8px;top:422.18px;font-size:9px;letter-spacing:-0.8px;color:#e6e6e6;">0.000</div>
<div class="t n" style="left:57.3px;top:439.72px;font-size:9px;letter-spacing:-0.62px;color:#e6e6e6;">Transmission Roughness</div>
<div class="t n" style="right:716.8px;top:439.72px;font-size:9px;letter-spacing:-0.8px;color:#e6e6e6;">0.000</div>
<div class="t n" style="left:46.4px;top:457.26px;font-size:9px;letter-spacing:-0.62px;color:#e6e6e6;">Emission</div>
<div class="t n" style="left:57.3px;top:474.8px;font-size:9px;letter-spacing:-0.62px;color:#e6e6e6;">Emission Strength</div>
<div class="t n" style="right:716.8px;top:474.8px;font-size:9px;letter-spacing:-0.8px;color:#e6e6e6;">1.000</div>
<div class="t n" style="left:57.3px;top:492.94px;font-size:9px;letter-spacing:-0.62px;color:#e6e6e6;">Alpha</div>
<div class="t n" style="right:716.8px;top:492.94px;font-size:9px;letter-spacing:-0.8px;color:#e6e6e6;">1.000</div>
<div class="t n" style="left:46.4px;top:509.88px;font-size:9px;letter-spacing:-0.62px;color:#e6e6e6;">Normal</div>
<div class="t n" style="left:46.4px;top:528.12px;font-size:9px;letter-spacing:-0.62px;color:#e6e6e6;">Clearcoat Normal</div>
<div class="t n" style="left:46.4px;top:544.96px;font-size:9px;letter-spacing:-0.62px;color:#e6e6e6;">Tangent</div>
<div class="t n" style="left:288.6px;top:40px;font-size:9px;letter-spacing:-0.7px;color:#e6e6e6;">Material Output</div>
<div class="t n" style="left:282px;top:60px;font-size:9px;letter-spacing:-0.62px;color:#e6e6e6;">All</div>
<div class="t n" style="left:276.9px;top:80.2px;font-size:9px;letter-spacing:-0.62px;color:#e6e6e6;">Surface</div>
<div class="t n" style="left:276.9px;top:97.7px;font-size:9px;letter-spacing:-0.62px;color:#e6e6e6;">Volume</div>
<div class="t n" style="left:276.9px;top:115.3px;font-size:9px;letter-spacing:-0.62px;color:#e6e6e6;">Displacement</div>
<div class="t n" style="left:319px;top:313.9px;font-size:9px;letter-spacing:-0.5px;color:#e2d7cd;">Cube_Color Bake</div>
<div class="t n" style="left:319px;top:345.9px;font-size:9px;letter-spacing:-0.5px;color:#e2d7cd;">Cube_Metallic Bake</div>
<div class="t n" style="left:319px;top:377.9px;font-size:9px;letter-spacing:-0.5px;color:#e2d7cd;">Cube_Roughness Bake</div>
<div class="t n" style="left:319px;top:409.9px;font-size:9px;letter-spacing:-0.5px;color:#e2d7cd;">Cube_Normal Bake</div>
<div class="t p" style="left:640.1px;top:0px;font-size:11px;letter-spacing:-0.6px;color:#e2e2e2;">Auto Margin</div>
<div class="t p" style="left:649.4px;top:30.2px;font-size:11px;letter-spacing:-0.6px;color:#e2e2e2;">Bake:</div>
<div class="t p" style="left:542.4px;width:300px;text-align:center;top:52.4px;font-size:11px;letter-spacing:-0.541px;color:#ffffff;">Material</div>
<div class="t p" style="left:683.2px;width:300px;text-align:center;top:52.4px;font-size:11px;letter-spacing:-0.363px;color:#e2e2e2;">Decals</div>
<div class="t p" style="left:603.6px;width:300px;text-align:center;top:80.2px;font-size:11px;letter-spacing:-0.6px;color:#e2e2e2;">Bake</div>
<div class="t p" style="left:629.3px;top:115.1px;font-size:11px;letter-spacing:-0.6px;color:#e2e2e2;">Maps:</div>
<div class="t p" style="left:692px;width:300px;text-align:center;top:114.8px;font-size:11px;letter-spacing:-0.69px;color:#e2e2e2;">Clear Queue</div>
<div class="t p" style="left:658.9px;top:140.05px;font-size:11px;letter-spacing:-0.494px;color:#e2e2e2;">Color Bake</div>
<div class="t p" style="left:653.4px;width:300px;text-align:center;top:140.05px;font-size:11px;letter-spacing:-0.6px;color:#e2e2e2;">4</div>
<div class="t p" style="left:658.8px;top:166.6px;font-size:11px;letter-spacing:-0.504px;color:#e2e2e2;">smart_metal_v2_01 / Smart Metal / Color <span class="e">...</span></div>
<div class="t p" style="left:658.9px;top:196.05px;font-size:11px;letter-spacing:-0.322px;color:#e2e2e2;">Metallic Bake</div>
<div class="t p" style="left:653.4px;width:300px;text-align:center;top:196.05px;font-size:11px;letter-spacing:-0.6px;color:#e2e2e2;">4</div>
<div class="t p" style="left:658.8px;top:222.6px;font-size:11px;letter-spacing:-0.484px;color:#e2e2e2;">smart_metal_v2_01 / Smart Metal / Metal<span class="e">...</span></div>
<div class="t p" style="left:658.9px;top:252.05px;font-size:11px;letter-spacing:-0.664px;color:#e2e2e2;">Roughness Bake</div>
<div class="t p" style="left:653.4px;width:300px;text-align:center;top:252.05px;font-size:11px;letter-spacing:-0.6px;color:#e2e2e2;">4</div>
<div class="t p" style="left:658.8px;top:278.6px;font-size:11px;letter-spacing:-0.515px;color:#e2e2e2;">smart_metal_v2_01 <span class="e">...</span>tal / Roughness Bake</div>
<div class="t p" style="left:658.9px;top:308.05px;font-size:11px;letter-spacing:-0.403px;color:#e2e2e2;">Normal Bake</div>
<div class="t p" style="left:653.4px;width:300px;text-align:center;top:308.05px;font-size:11px;letter-spacing:-0.6px;color:#e2e2e2;">4</div>
<div class="t p" style="left:658.8px;top:334.6px;font-size:11px;letter-spacing:-0.488px;color:#e2e2e2;">smart_metal_v2_01 / Smart Metal / Norm<span class="e">...</span></div>
<div class="t p" style="left:612.9px;width:300px;text-align:center;top:358px;font-size:11px;letter-spacing:-0.539px;color:#8c8c8c;text-shadow:none">New Maps from Sockets</div>
<div class="t p" style="left:619.3px;top:393.7px;font-size:11px;letter-spacing:-0.555px;color:#e2e2e2;">Bake Results:</div>
<div class="t p" style="left:649.4px;top:424px;font-size:11px;letter-spacing:-0.541px;color:#e2e2e2;">Bake Results</div>
<div class="t p" style="left:782.5px;top:424px;font-size:11px;letter-spacing:-0.763px;color:#e2e2e2;">Sort:</div>
<div class="t p" style="left:836.4px;top:424px;font-size:11px;letter-spacing:-0.6px;color:#dddddd;">Date</div>
<div class="t p" style="left:644.3px;top:452.3px;font-size:11px;letter-spacing:-0.607px;color:#e2e2e2;">Cube: 4m11s ago</div>
<div class="t p" style="left:649px;top:477.15px;font-size:11px;letter-spacing:-0.604px;color:#e2e2e2;">Cube_Color Bake</div>
<div class="t p" style="left:649px;top:499.15px;font-size:11px;letter-spacing:-0.492px;color:#e2e2e2;">Cube_Metallic Bake</div>
<div class="t p" style="left:649px;top:521.15px;font-size:11px;letter-spacing:-0.702px;color:#e2e2e2;">Cube_Roughness Bake</div>
<div class="t p" style="left:649px;top:543.15px;font-size:11px;letter-spacing:-0.562px;color:#e2e2e2;">Cube_Normal Bake</div>
<svg id="ann" style="left:0;top:0" width="926" height="578" viewBox="0 0 926 578"><path d="M854.35 399H857.95V438.6L863.7 433.8L855.5 457.6L847.6 433.8L854.35 439Z" fill="#ee1111"/></svg>
</div></body></html>
